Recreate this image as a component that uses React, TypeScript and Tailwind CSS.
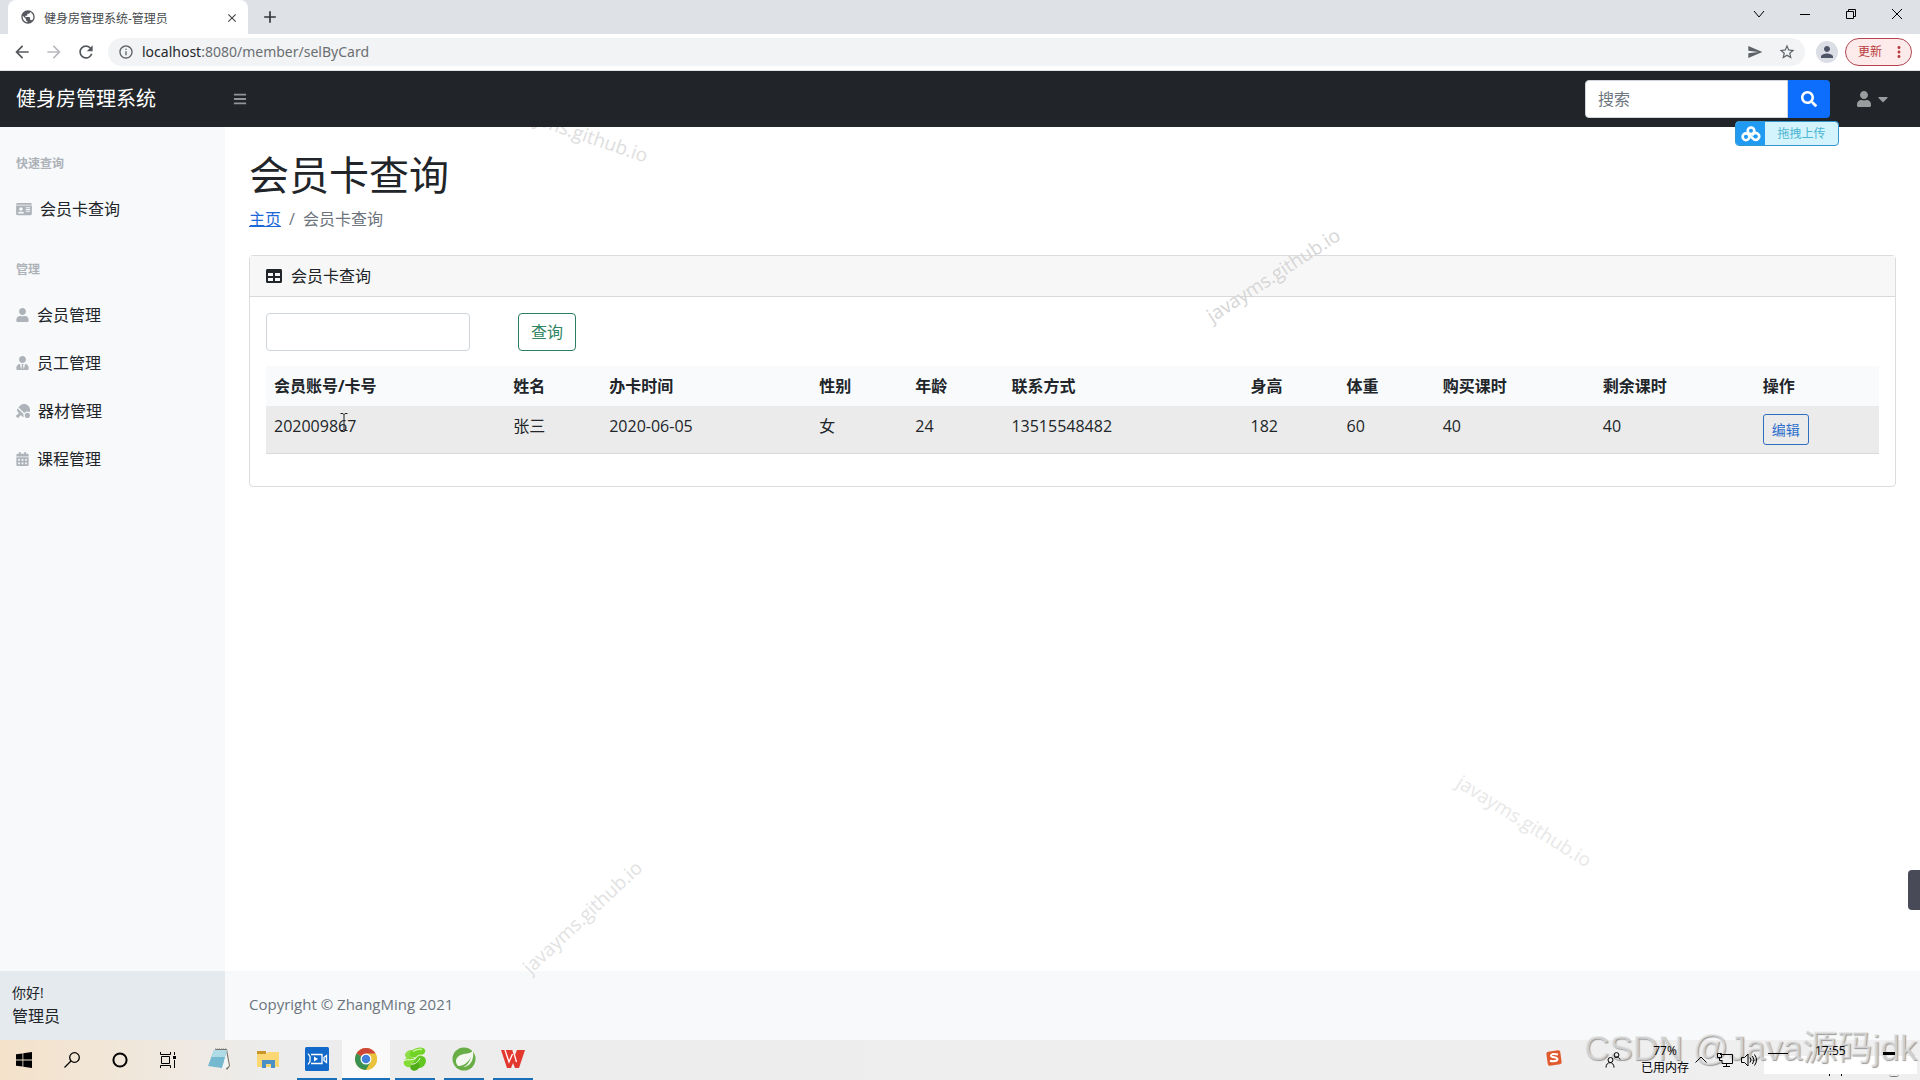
import type { ReactNode } from 'react';
import {
  FaBars,
  FaCalendarAlt,
  FaCaretDown,
  FaIdCard,
  FaSearch,
  FaTable,
  FaTableTennis,
  FaUser,
  FaUserTie,
} from 'react-icons/fa';
import {
  MdArrowBack,
  MdArrowForward,
  MdClose,
  MdInfoOutline,
  MdMoreVert,
  MdPerson,
  MdPublic,
  MdAdd,
  MdRefresh,
  MdSend,
  MdStarBorder,
} from 'react-icons/md';

const manageLinks = [
  { label: '会员管理', icon: <FaUser className="h-3.5 w-[13px]" /> },
  { label: '员工管理', icon: <FaUserTie className="h-3.5 w-[13px]" /> },
  { label: '器材管理', icon: <FaTableTennis className="h-3.5 w-3.5" /> },
  { label: '课程管理', icon: <FaCalendarAlt className="h-3.5 w-[13px]" /> },
];

const columns = [
  { title: '会员账号/卡号', value: '202009867', width: 'w-[239px]' },
  { title: '姓名', value: '张三', width: 'w-24' },
  { title: '办卡时间', value: '2020-06-05', width: 'w-[210px]' },
  { title: '性别', value: '女', width: 'w-24' },
  { title: '年龄', value: '24', width: 'w-24' },
  { title: '联系方式', value: '13515548482', width: 'w-[239px]' },
  { title: '身高', value: '182', width: 'w-24' },
  { title: '体重', value: '60', width: 'w-24' },
  { title: '购买课时', value: '40', width: 'w-40' },
  { title: '剩余课时', value: '40', width: 'w-40' },
];

function BrowserChrome() {
  return (
    <header>
      <div className="flex h-[34px] items-stretch bg-[#dee1e6] pl-2">
        <div className="flex w-60 items-center rounded-t-lg bg-white pr-2 pl-3 text-[#45494d]">
          <MdPublic className="h-4 w-4 shrink-0 text-[#55595e]" />
          <span className="ml-2 flex-1 pt-1 text-xs leading-4 whitespace-nowrap">健身房管理系统-管理员</span>
          <button aria-label="关闭标签页" className="grid h-4 w-4 place-items-center pt-0.5">
            <MdClose className="h-3.5 w-3.5" />
          </button>
        </div>
        <button aria-label="新标签页" className="ml-3 grid w-5 place-items-center text-[#33373b]">
          <MdAdd className="h-5 w-5" />
        </button>
        <div className="ml-auto flex h-7 text-black">
          <button aria-label="搜索标签页" className="grid w-[46px] place-items-center">
            <svg className="h-3 w-3" viewBox="0 0 12 12" fill="none" stroke="currentColor"><path d="M1 3l5 6 5-6" /></svg>
          </button>
          <button aria-label="最小化" className="grid w-[46px] place-items-center">
            <svg className="h-3 w-3" viewBox="0 0 12 12" fill="none" stroke="currentColor"><path d="M1 6.5h10" /></svg>
          </button>
          <button aria-label="还原" className="grid w-[46px] place-items-center">
            <svg className="h-3 w-3" viewBox="0 0 12 12" fill="none" stroke="currentColor"><path d="M1.5 3.5h7v7h-7zM3.5 3.500v-2h7v7h-2" /></svg>
          </button>
          <button aria-label="关闭" className="grid w-[46px] place-items-center">
            <svg className="h-3 w-3" viewBox="0 0 12 12" fill="none" stroke="currentColor"><path d="M1 1l10 10M11 1L1 11" /></svg>
          </button>
        </div>
      </div>
      <div className="flex h-[37px] items-center border-b border-[#dfe1e3] bg-white px-2">
        <div className="flex gap-1">
          <button aria-label="后退" className="grid h-7 w-7 place-items-center text-[#54585d]"><MdArrowBack className="h-5 w-5" /></button>
          <button aria-label="前进" className="grid h-7 w-7 place-items-center text-[#b9bbbe]"><MdArrowForward className="h-5 w-5" /></button>
          <button aria-label="刷新" className="grid h-7 w-7 place-items-center text-[#54585d]"><MdRefresh className="h-5 w-5" /></button>
        </div>
        <div className="ml-2 flex h-7 flex-1 items-center rounded-full bg-[#f1f3f4] pr-[9px] pl-2.5 text-[#5f6368]">
          <MdInfoOutline className="h-4 w-4" />
          <span className="ml-2 flex-1 font-['Noto_Sans',sans-serif] text-sm leading-6 text-[#6b6f73]">
            <span className="text-[#26282b]">localhost</span>:8080/member/selByCard
          </span>
          <button aria-label="发送"><MdSend className="h-4 w-4" /></button>
          <button aria-label="收藏" className="ml-[15px]"><MdStarBorder className="h-[18px] w-[18px]" /></button>
        </div>
        <button aria-label="用户" className="ml-[11px] grid h-[22px] w-[22px] place-items-center rounded-full bg-[#dbdee5] text-[#4e5567]">
          <MdPerson className="h-[18px] w-[18px]" />
        </button>
        <button className="ml-[7px] flex h-7 w-[67px] items-center rounded-full border border-[#b34450] bg-[#fdebec] pl-3 text-xs text-[#b93c3c]">
          更新
          <MdMoreVert className="ml-2 h-[18px] w-[18px]" />
        </button>
      </div>
    </header>
  );
}

function TopNav() {
  return (
    <nav className="relative z-10 flex h-14 items-center bg-[#212529] pr-[31px] pl-4">
      <a href="#home" className="w-[209px] text-xl leading-8 text-white">健身房管理系统</a>
      <button aria-label="菜单" className="ml-2 text-[#92969a]"><FaBars className="h-3.5 w-3.5" /></button>
      <form className="ml-auto flex h-[38px]">
        <input aria-label="搜索" placeholder="搜索" className="w-[203px] rounded-l border border-[#ced4da] bg-white px-3 text-base text-[#212529] outline-none placeholder:text-[#6c757d]" />
        <button type="button" aria-label="搜索" className="grid w-[42px] place-items-center rounded-r bg-[#0d6efd] text-white">
          <FaSearch className="h-4 w-4" />
        </button>
      </form>
      <button aria-label="账户" className="ml-[26px] flex items-center text-[#9a9c9e]">
        <FaUser className="h-4 w-4" />
        <FaCaretDown className="ml-[5px] h-4 w-3" />
      </button>
      <button className="absolute top-[50px] right-[81px] flex h-[25px] w-[104px] overflow-hidden rounded border border-[#3396cf] bg-[#d3f4fc] text-xs text-[#4cb5d3]">
        <span className="grid h-full w-[29px] place-items-center bg-[#219af2]">
          <svg className="h-4 w-5" viewBox="0 0 20 16" fill="none" stroke="#fff" strokeWidth="2.600">
            <circle cx="10" cy="4.800" r="3.300" />
            <circle cx="5" cy="10.800" r="3.400" />
            <path d="M7.500 8.500l5 4.500a3.400 3.400 0 1 0 0-5.200l-1.500 1.500" />
          </svg>
        </span>
        <span className="flex-1 leading-[23px]">拖拽上传</span>
      </button>
    </nav>
  );
}

function SideLink({ icon, label }: { icon: ReactNode; label: string }) {
  return (
    <a href="#section" className="flex h-12 items-center px-4 leading-6 text-[#212529]">
      <span className="mr-2 text-[#adb3b9]">{icon}</span>
      {label}
    </a>
  );
}

function Sidebar() {
  return (
    <aside className="flex w-[225px] shrink-0 flex-col bg-[#f7f9fb]">
      <div className="flex-1">
        <h2 className="px-4 pt-7 pb-3 text-xs leading-[18px] font-bold text-[#adb2b8]">快速查询</h2>
        <SideLink icon={<FaIdCard className="h-3.5 w-4" />} label="会员卡查询" />
        <h2 className="px-4 pt-7 pb-3 text-xs leading-[18px] font-bold text-[#adb2b8]">管理</h2>
        {manageLinks.map((link) => (
          <SideLink key={link.label} icon={link.icon} label={link.label} />
        ))}
      </div>
      <div className="bg-[#e5eaef] px-3 pt-[11px] pb-3 text-[#212529]">
        <div className="text-sm leading-[22px]">你好!</div>
        <div className="leading-6">管理员</div>
      </div>
    </aside>
  );
}

function CardQuery() {
  return (
    <main className="flex-1 px-6 pt-6 text-[#212529]">
      <h1 className="text-[40px] leading-[48px]">会员卡查询</h1>
      <nav aria-label="路径" className="mt-2 flex gap-2 leading-6 text-[#6c757d]">
        <a href="#home" className="text-[#1c68d8] underline">主页</a>
        <span>/</span>
        <span>会员卡查询</span>
      </nav>
      <section className="mt-6 rounded border border-[#dcdcdc] bg-white">
        <div className="flex items-center border-b border-[#d9d9d9] bg-[#f7f7f7] px-4 py-2 leading-6">
          <FaTable className="mr-[9px] h-4 w-4" />
          会员卡查询
        </div>
        <div className="p-4">
          <form className="mb-[15px] flex gap-12">
            <input aria-label="会员卡号" className="h-[38px] w-[204px] rounded border border-[#ced4da] px-3 outline-none" />
            <button type="button" className="h-[38px] w-[58px] rounded border border-[#2b7f5f] text-[#2f8462]">查询</button>
          </form>
          <table className="mb-4 w-full table-fixed border-collapse text-left leading-6">
            <thead className="bg-[#f8fafc]">
              <tr>
                {columns.map((c) => (
                  <th key={c.title} className={`${c.width} p-2 font-bold`}>{c.title}</th>
                ))}
                <th className="w-[124px] p-2 font-bold">操作</th>
              </tr>
            </thead>
            <tbody>
              <tr className="border-b border-[#d9dadb] bg-[#ebebeb]">
                {columns.map((c) => (
                  <td key={c.title} className="p-2 align-top">{c.value}</td>
                ))}
                <td className="p-2 align-top">
                  <button className="block h-[31px] w-[46px] rounded-[3px] border border-[#2f6fc2] text-sm text-[#2d70cb]">编辑</button>
                </td>
              </tr>
            </tbody>
          </table>
        </div>
      </section>
    </main>
  );
}

function Watermark({ className }: { className: string }) {
  return (
    <span aria-hidden="true" className={`pointer-events-none absolute w-max text-[19px] leading-6 ${className}`}>
      javayms.github.io
    </span>
  );
}

function TaskApp({ label, underline = '', children }: { label: string; underline?: string; children: ReactNode }) {
  return (
    <button aria-label={label} className={`grid h-10 w-10 place-items-center border-b-2 ${underline || 'border-transparent'}`}>
      {children}
    </button>
  );
}

function Taskbar() {
  return (
    <footer className="relative flex h-10 bg-linear-to-r from-[#f4e2ca] via-[#ececec] via-14% to-[#efefef]">
      <div className="flex text-black">
        <button aria-label="开始" className="grid w-12 place-items-center">
          <svg className="h-4 w-4" viewBox="0 0 16 16" fill="currentColor"><path d="M0 2.300L6.500 1.400v6.200H0zM7.300 1.300L16 0v7.600H7.300zM0 8.400h6.500v6.200L0 13.700zM7.300 8.400H16V16l-8.700-1.300z" /></svg>
        </button>
        <button aria-label="搜索" className="grid w-12 place-items-center">
          <svg className="h-4 w-4" viewBox="0 0 16 16" fill="none" stroke="currentColor" strokeWidth="1.300"><circle cx="10.500" cy="5.500" r="4.800" /><path d="M7 9L.5 15.500" /></svg>
        </button>
        <button aria-label="语音助手" className="grid w-12 place-items-center">
          <svg className="h-4 w-4" viewBox="0 0 16 16" fill="none" stroke="currentColor" strokeWidth="2"><circle cx="8" cy="8" r="6.600" /></svg>
        </button>
        <button aria-label="任务视图" className="grid w-12 place-items-center">
          <svg className="h-4 w-4" viewBox="0 0 16 16" fill="none" stroke="currentColor"><path d="M.5 0v2.500h10V0M1.500 4.500h8v7h-8zM.5 16v-2.500h10V16M14.500 0v3M14.500 8v8" /><path d="M13 4h3v3h-3z" fill="currentColor" stroke="none" /></svg>
        </button>
      </div>
      <div className="ml-[7px] flex gap-[9px]">
        <TaskApp label="记事本">
          <svg className="h-6 w-6" viewBox="0 0 24 24"><path d="M8 2l12 0 3 17-3 4z" fill="#77705f" /><path d="M19 3l3 16-4 3-3-1z" fill="#f3f5f4" /><path d="M7 3l13 0-5 18-14-2z" fill="#74b9cf" /><path d="M7 3h13l-2 7-14 0z" fill="#aedbe6" /><path d="M8 2h12" stroke="#7d878b" strokeDasharray="1 1" /></svg>
        </TaskApp>
        <TaskApp label="文件资源管理器">
          <svg className="h-6 w-6" viewBox="0 0 24 24"><path d="M1 4h9v3H1z" fill="#c99526" /><path d="M1 7h9l2-2h11v15H1z" fill="#fbd873" /><path d="M6 13h13v8h-4v-4h-5v4H6z" fill="#4a8fc6" /></svg>
        </TaskApp>
        <TaskApp label="录屏" underline="border-[#1a70b8]">
          <svg className="h-6 w-6" viewBox="0 0 24 24" fill="none" stroke="#fff" strokeWidth="1.300"><rect width="24" height="24" rx="1.500" fill="#1269c9" stroke="none" /><path d="M6 7.500h11v9H6M3 6.500l2 3v5l-2 3M19 10.500l2.500-2v7l-2.500-2z" /><path d="M9 9.500v5l4-2.500z" fill="#fff" stroke="none" /></svg>
        </TaskApp>
        <div className="-mx-1 grid w-12 place-items-center border-b-2 border-[#1a70b8] bg-[#fafafa]">
          <svg className="h-6 w-6" viewBox="0 0 48 48" role="img" aria-label="浏览器"><circle cx="24" cy="24" r="22" fill="#eac33c" /><path d="M24 24L4.950 13A22 22 0 0 1 43.050 13z" fill="#ce4638" /><path d="M4.950 13A22 22 0 0 0 24 46l9.500-16.500L24 24z" fill="#3b9152" /><path d="M24 13h19.050A22 22 0 0 1 24 46l9.500-16.500z" fill="#eac33c" /><circle cx="24" cy="24" r="11" fill="#fff" /><circle cx="24" cy="24" r="8.500" fill="#4380db" /></svg>
        </div>
        <TaskApp label="数据库" underline="border-[#1a70b8]">
          <svg className="h-6 w-6" viewBox="0 0 24 24"><ellipse cx="6.500" cy="7" rx="5" ry="3.500" fill="#8fdd4a" transform="rotate(-35 6.500 7)" /><ellipse cx="14.500" cy="5.500" rx="8" ry="4.500" fill="#72d327" transform="rotate(-18 14.500 5.500)" /><ellipse cx="6.500" cy="15" rx="6" ry="5" fill="#85dc38" transform="rotate(-25 6.500 15)" /><ellipse cx="17" cy="15" rx="6.500" ry="5.500" fill="#62c622" transform="rotate(-50 17 15)" /><ellipse cx="12" cy="19.500" rx="5" ry="4" fill="#50ad18" transform="rotate(-35 12 19.500)" /><path d="M1 13.500c5-2 9 1 12-3 2-2.500 5-3 8-2M8 17c4 1 8-3 9-6" stroke="#f0fbe0" fill="none" /><path d="M10 4.500c3-2 6-2.500 9-2" stroke="#c8f59a" strokeWidth="1.500" fill="none" /></svg>
        </TaskApp>
        <TaskApp label="开发工具" underline="border-[#1a70b8]">
          <svg className="h-6 w-6" viewBox="0 0 24 24"><circle cx="12" cy="12" r="11.500" fill="#68ad45" /><path d="M21 3c-2 4-6 3-11 4.500C4 9.500 2.500 14 5.500 18.500 14 23 23 17 21 3z" fill="#f3f7f0" /><path d="M4 19c7 .5 12-3 15-9-2 7-6 11-12.500 11z" fill="#68ad45" /></svg>
        </TaskApp>
        <TaskApp label="办公" underline="border-[#1a70b8]">
          <svg className="h-6 w-6" viewBox="0 0 24 24"><path d="M0 3h12l2 5 2-5h8l-6 18h-4l-2-5-2 5H6z" fill="#e3382e" /><path d="M4 3l4 12 3.500-8M12 3l3.500 12" stroke="#fff" strokeWidth="1.300" fill="none" /></svg>
        </TaskApp>
      </div>
      <div className="ml-auto flex items-center pr-[3px] text-black">
        <svg className="mr-[43px] mb-1 h-4 w-4" viewBox="0 0 16 16" role="img" aria-label="输入法"><rect x="1" y="1" width="14" height="14" rx="2" fill="#e05a2d" transform="rotate(-8 8 8)" /><path d="M12 4.500c-4-1-7-.5-7 1.200 0 2 6.500 1.300 6.500 3.600 0 1.900-4.500 2.400-7.500 1.400" fill="none" stroke="#fff" strokeWidth="2" /></svg>
        <svg className="relative z-10 mr-5 h-4 w-4" viewBox="0 0 16 16" fill="none" stroke="currentColor" role="img" aria-label="人脉"><circle cx="5.500" cy="8" r="2.500" /><path d="M1 15.500c0-6.500 8-6.500 8 0M15 7.500c-.5-2.500-3.500-3.500-5.500-1.500" /><circle cx="11.500" cy="3" r="2.400" /></svg>
        <div className="relative z-10 mr-1 pb-0.5 text-center text-xs leading-[17px]">
          <div>77%</div>
          <div>已用内存</div>
        </div>
        <svg className="relative z-10 mr-2 h-4 w-4" viewBox="0 0 16 16" fill="none" stroke="currentColor"><path d="M2.500 10.500L8 5l5.500 5.500" /></svg>
        <svg className="relative z-10 mr-2 h-4 w-4" viewBox="0 0 16 16" fill="none" stroke="currentColor"><path d="M3 2.500h12.500v9H5V8M.5 1.500h4v4h-4zM2.500 5.500v3H5M9.500 11.500v3M6 14.500h7" /></svg>
        <svg className="relative z-10 mr-[7px] h-4 w-4" viewBox="0 0 16 16" fill="none" stroke="currentColor"><path d="M.5 5.500h3L7 2v12l-3.500-3.500h-3zM9 5.500q2 2.500 0 5M11.500 4q3 4 0 8M13.500 2.500q4 5.500 0 11" /></svg>
        <div className="relative flex h-10 w-[153px] flex-col pt-4">
          <div className="h-[18px] bg-white" />
          <span className="absolute top-[13px] left-1 z-10 h-px w-5 bg-black" />
          <span className="absolute top-0.5 left-[51px] z-10 text-xs leading-[18px]">17:55</span>
          <span className="absolute top-3 right-[22px] z-10 h-[3px] w-3 bg-black" />
          <span className="absolute top-[34px] left-[65px] h-0.5 w-px bg-black" />
          <span className="absolute top-[34px] left-[77px] h-0.5 w-px bg-black" />
          <span className="absolute top-[34px] right-[18px] h-[3px] w-2.5 rounded-b-full border-b border-[#777]" />
        </div>
      </div>
      <span aria-hidden="true" className="pointer-events-none absolute right-[3px] bottom-3 font-['Liberation_Sans','Noto_Sans_CJK_SC',sans-serif] text-[35px] leading-10 whitespace-nowrap text-[#e6e6e6]/70 [text-shadow:1px_1px_1px_#9a9a9a]">
        CSDN @Java源码jdk
      </span>
    </footer>
  );
}

export default function App() {
  return (
    <div className="relative flex min-h-screen flex-col overflow-hidden bg-white font-['Open_Sans','Noto_Sans_CJK_SC',sans-serif] text-base">
      <BrowserChrome />
      <TopNav />
      <div className="flex flex-1">
        <Sidebar />
        <div className="flex min-w-0 flex-1 flex-col">
          <CardQuery />
          <div className="bg-[#f7f9fb] px-6 pt-[23px] pb-[25px] text-[15px] leading-[21px] text-[#6c757d]">Copyright © ZhangMing 2021</div>
        </div>
      </div>
      <Taskbar />
      <Watermark className="top-[119px] left-[497px] rotate-[19deg] text-[#dedede]" />
      <Watermark className="top-[263px] left-[1196px] -rotate-[33deg] text-[#d6d6d6]" />
      <Watermark className="top-[905px] left-[505px] -rotate-[43deg] text-[#e2e2e2]" />
      <Watermark className="top-[809px] left-[1447px] rotate-[32deg] text-[#e8e8e8]" />
      <svg className="pointer-events-none absolute top-[413px] left-[340px] h-[18px] w-2" viewBox="0 0 8 18" fill="none" stroke="#222"><path d="M.5.5h2.500l1 1 1-1h2.500M4 1v16M.5 17.500h2.500l1-1 1 1h2.500" /></svg>
      <div className="absolute top-[870px] right-0 h-10 w-3 rounded-l bg-[#494a57]" />
    </div>
  );
}
